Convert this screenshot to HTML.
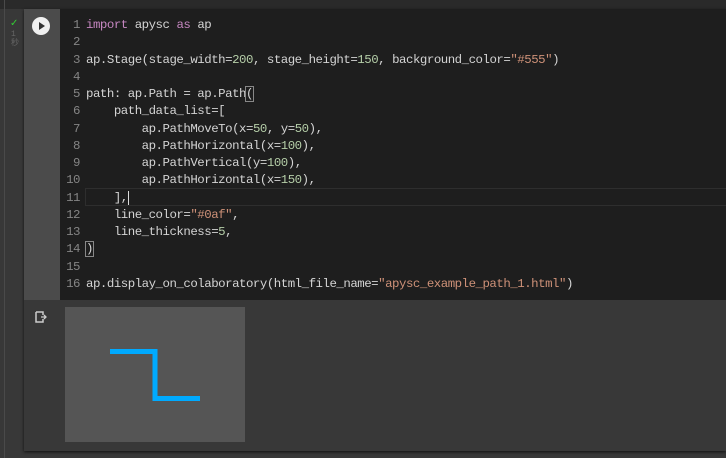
<!DOCTYPE html>
<html><head><style>
body{margin:0;width:726px;height:458px;background:#383838;position:relative;overflow:hidden;font-family:"Liberation Mono",monospace}
.top{position:absolute;left:0;top:0;width:726px;height:9px;background:#2a2a2a}
.gl{position:absolute;left:4px;top:0;width:1px;height:458px;background:#4a4a4a}
.cell{position:absolute;left:24px;top:9px;width:702px;height:442px;background:#383838;box-shadow:0 1px 3px #111}
.run{position:absolute;left:24px;top:9px;width:36px;height:291px;background:#4b4b4b}
.ed{position:absolute;left:60px;top:9px;width:666px;height:291px;background:#1e1e1e}
.btn{position:absolute;left:32px;top:17px;width:18px;height:18px;border-radius:50%;background:#f0f0f0}
.btn:after{content:"";position:absolute;left:7px;top:5px;border-left:6px solid #333;border-top:4px solid transparent;border-bottom:4px solid transparent}
.code{position:absolute;left:60px;top:17px;font-size:12.4px;letter-spacing:-0.48px;line-height:17.27px;color:#d4d4d4;white-space:pre}
.ln{display:inline-block;width:20px;text-align:right;color:#858585;margin-right:6px}
.k{color:#c586c0}.n{color:#b5cea8}.s{color:#ce9178}
.cur{position:absolute;left:85px;top:188px;width:640px;height:16px;border:1px solid #2e2e2e}
.out{position:absolute;left:65px;top:307px;width:180px;height:135px;background:#555}
</style></head><body>
<div class="top"></div><div class="gl"></div>
<div class="cell"></div><div class="run"></div><div class="ed"></div>
<div style="position:absolute;left:10px;top:18px;color:#3c3;font-size:10px">✓</div>
<div style="position:absolute;left:11px;top:30px;color:#666;font-size:8px;line-height:9px">1<br>秒</div>
<div class="btn"></div>
<div class="cur"></div>
<div class="code"><span class="ln">1</span><span class="k">import</span> apysc <span class="k">as</span> ap
<span class="ln">2</span>
<span class="ln">3</span>ap.Stage(stage_width=<span class="n">200</span>, stage_height=<span class="n">150</span>, background_color=<span class="s">"#555"</span>)
<span class="ln">4</span>
<span class="ln">5</span>path: ap.Path = ap.Path<span style="outline:1px solid #888">(</span>
<span class="ln">6</span>    path_data_list=[
<span class="ln">7</span>        ap.PathMoveTo(x=<span class="n">50</span>, y=<span class="n">50</span>),
<span class="ln">8</span>        ap.PathHorizontal(x=<span class="n">100</span>),
<span class="ln">9</span>        ap.PathVertical(y=<span class="n">100</span>),
<span class="ln">10</span>        ap.PathHorizontal(x=<span class="n">150</span>),
<span class="ln">11</span>    ],<span style="border-left:1px solid #ddd"></span>
<span class="ln">12</span>    line_color=<span class="s">"#0af"</span>,
<span class="ln">13</span>    line_thickness=<span class="n">5</span>,
<span class="ln">14</span><span style="outline:1px solid #888">)</span>
<span class="ln">15</span>
<span class="ln">16</span>ap.display_on_colaboratory(html_file_name=<span class="s">"apysc_example_path_1.html"</span>)</div>
<svg style="position:absolute;left:34px;top:310px" width="16" height="14"><path d="M2 2h7v3M2 2v10h7v-3" fill="none" stroke="#ccc" stroke-width="1.5"/><path d="M7 7h5M10 5l2 2-2 2" fill="none" stroke="#ccc" stroke-width="1.3"/></svg>
<div class="out"><svg width="180" height="135"><path d="M45 44.5H90V91.5H135" fill="none" stroke="#00aaff" stroke-width="5"/></svg></div>
</body></html>
